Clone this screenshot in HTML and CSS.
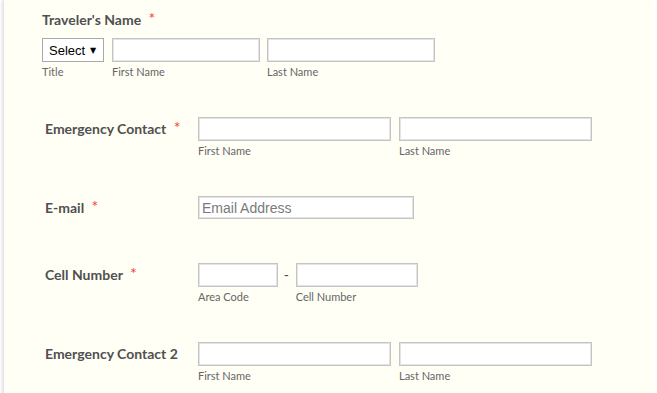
FILE: index.html
```html
<!DOCTYPE html>
<html lang="en">
<head>
    <meta charset="UTF-8">
    <title>Traveler Form</title>
    <link rel="stylesheet" href="styles.css">
</head>
<body>
    <div class="form-card">
        <ul class="form-list">
            <li class="form-line top-label">
                <label class="form-label">Traveler's Name <span class="required">*</span></label>
                <div class="field-group">
                    <div class="sub-field">
                        <span class="select-box">
                            <select class="select-input">
                                <option>Select</option>
                            </select>
                            <span class="select-arrow">&#9660;</span>
                        </span>
                        <span class="sub-label">Title</span>
                    </div>
                    <div class="sub-field">
                        <input type="text" class="text-input w-first">
                        <span class="sub-label">First Name</span>
                    </div>
                    <div class="sub-field">
                        <input type="text" class="text-input w-last">
                        <span class="sub-label">Last Name</span>
                    </div>
                </div>
            </li>

            <li class="form-line">
                <label class="form-label">Emergency Contact <span class="required">*</span></label>
                <div class="field-group">
                    <div class="sub-field">
                        <input type="text" class="text-input w-name">
                        <span class="sub-label">First Name</span>
                    </div>
                    <div class="sub-field">
                        <input type="text" class="text-input w-name">
                        <span class="sub-label">Last Name</span>
                    </div>
                </div>
            </li>

            <li class="form-line no-sub">
                <label class="form-label">E-mail <span class="required">*</span></label>
                <div class="field-group">
                    <input type="email" class="text-input w-email" placeholder="Email Address">
                </div>
            </li>

            <li class="form-line">
                <label class="form-label">Cell Number <span class="required">*</span></label>
                <div class="field-group phone-group">
                    <div class="sub-field">
                        <input type="tel" class="text-input w-area">
                        <span class="sub-label">Area Code</span>
                    </div>
                    <span class="phone-dash">-</span>
                    <div class="sub-field">
                        <input type="tel" class="text-input w-phone">
                        <span class="sub-label">Cell Number</span>
                    </div>
                </div>
            </li>

            <li class="form-line">
                <label class="form-label">Emergency Contact 2</label>
                <div class="field-group">
                    <div class="sub-field">
                        <input type="text" class="text-input w-name">
                        <span class="sub-label">First Name</span>
                    </div>
                    <div class="sub-field">
                        <input type="text" class="text-input w-name">
                        <span class="sub-label">Last Name</span>
                    </div>
                </div>
            </li>
        </ul>
    </div>
</body>
</html>
```

FILE: styles.css
```css
:root {
    --cream: #fffff5;
    --label: #505050;
    --sub: #666666;
    --required: #f23a3c;
}

* {
    box-sizing: border-box;
    margin: 0;
    padding: 0;
}

body {
    font-family: Lato, 'Open Sans', sans-serif;
    background: #ffffff;
    height: 100vh;
    overflow: hidden;
    padding: 0 3px 0 4px;
}

.form-card {
    background: var(--cream);
    min-height: 100%;
    border-radius: 0 8px 8px 0;
    box-shadow: -2px 0 3px rgba(0, 0, 0, 0.12);
    padding-top: 12px;
}

.form-list {
    list-style: none;
}

.form-line {
    display: flex;
    align-items: flex-start;
    padding: 20px 0 19px 41px;
}

.form-line.no-sub {
    padding-bottom: 23px;
}

.form-label {
    width: 153px;
    flex-shrink: 0;
    font-size: 14px;
    font-weight: 700;
    color: var(--label);
    line-height: 24px;
}

.required {
    color: var(--required);
    font-size: 16px;
    font-weight: 400;
    margin-left: 4px;
    line-height: 0;
    position: relative;
    top: -1px;
}

.top-label {
    flex-direction: column;
    padding: 0 0 19px 38px;
}

.top-label .form-label {
    width: auto;
    line-height: 16px;
    margin-bottom: 10px;
}

.field-group {
    display: flex;
    align-items: flex-start;
    gap: 8px;
}

.top-label .field-group {
    gap: 7px;
}

.sub-field {
    display: flex;
    flex-direction: column;
}

.sub-label {
    font-size: 11px;
    color: var(--sub);
    line-height: 12px;
    margin-top: 4px;
}

.text-input {
    height: 24px;
    border: 1px solid #c4c4c4;
    box-shadow: inset 0 0 0 1px #e4e4e4;
    background: #ffffff;
    font-family: Arial, 'Liberation Sans', sans-serif;
    font-size: 14px;
    padding: 0 3px;
    outline: none;
}

.text-input::placeholder {
    color: #7a7a7a;
}

.w-first { width: 148px; }
.w-last { width: 168px; }
.w-name { width: 193px; }
.w-email { width: 216px; height: 23px; }
.w-area { width: 80px; }
.w-phone { width: 122px; }

.select-box {
    display: inline-flex;
    align-items: center;
    width: 62px;
    height: 24px;
    border: 1px solid #a9a9a9;
    background: #ffffff;
    margin-right: 1px;
}

.select-input {
    appearance: none;
    -webkit-appearance: none;
    border: none;
    background: transparent;
    font-family: Arial, 'Liberation Sans', sans-serif;
    font-size: 13px;
    color: #000000;
    padding-left: 6px;
    width: 47px;
    outline: none;
}

.select-arrow {
    font-size: 8px;
    color: #000000;
    font-family: 'DejaVu Sans', sans-serif;
}

.phone-group {
    gap: 0;
}

.phone-dash {
    font-family: Arial, 'Liberation Sans', sans-serif;
    font-size: 14px;
    color: var(--label);
    line-height: 24px;
    padding: 0 7px 0 6px;
}
```
